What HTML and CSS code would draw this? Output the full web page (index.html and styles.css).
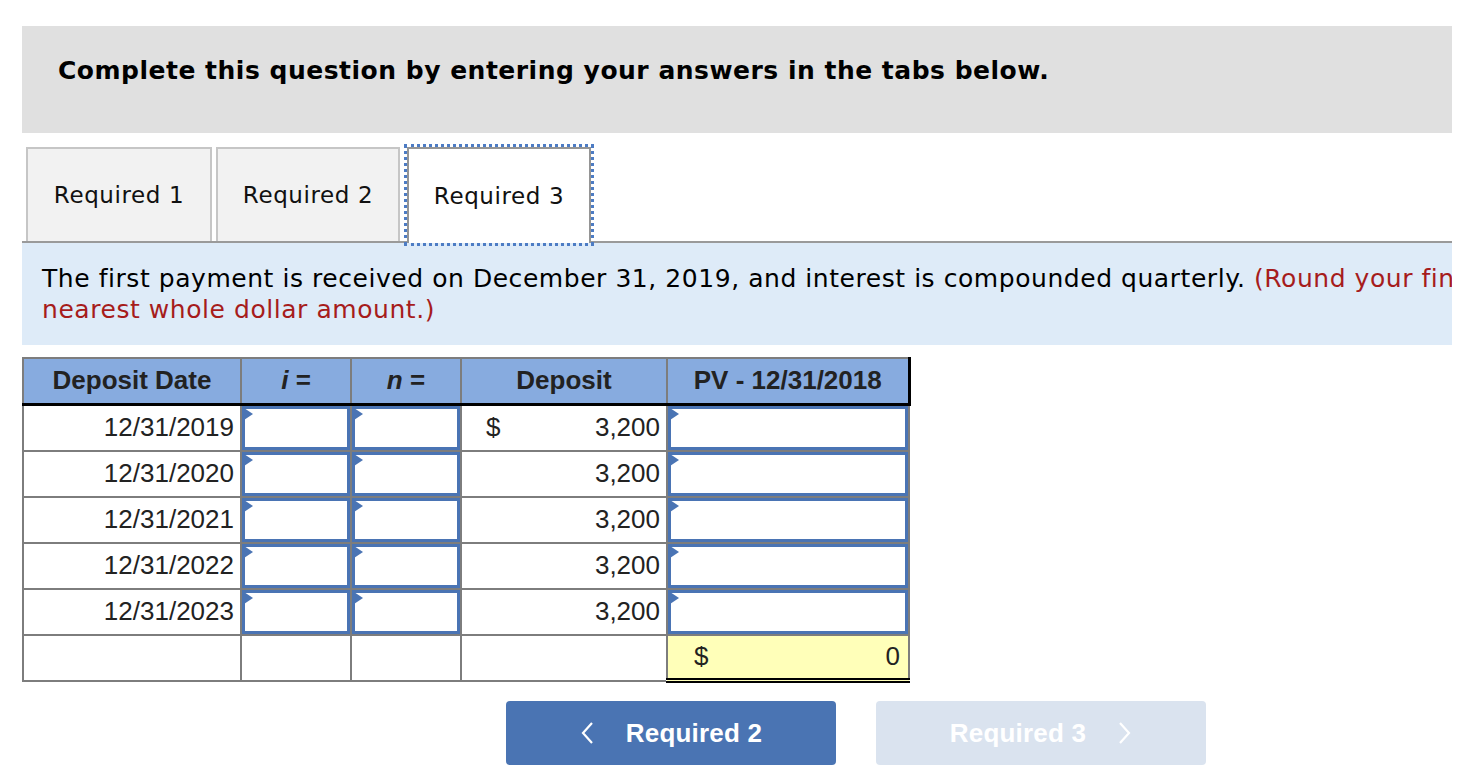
FILE: index.html
```html
<!DOCTYPE html>
<html>
<head>
<meta charset="utf-8">
<link rel="stylesheet" href="styles.css">
</head>
<body>
<div class="page">
  <div class="banner">Complete this question by entering your answers in the tabs below.</div>
  <div class="tabs">
    <div class="tab">Required 1</div>
    <div class="tab">Required 2</div>
    <div class="tab active">Required 3</div>
  </div>
  <div class="panel">
    <p class="instr">The first payment is received on December 31, 2019, and interest is compounded quarterly. <span class="red">(Round your final answers to the<br>nearest whole dollar amount.)</span></p>
  </div>
  <table class="grid">
    <colgroup>
      <col class="c1"><col class="c2"><col class="c3"><col class="c4"><col class="c5">
    </colgroup>
    <thead>
      <tr>
        <th>Deposit Date</th>
        <th><i>i</i> =</th>
        <th><i>n</i> =</th>
        <th>Deposit</th>
        <th class="last">PV - 12/31/2018</th>
      </tr>
    </thead>
    <tbody>
      <tr>
        <td class="date">12/31/2019</td>
        <td class="in"><div class="box"></div></td>
        <td class="in"><div class="box"></div></td>
        <td class="amt"><span class="cur">$</span><span>3,200</span></td>
        <td class="in"><div class="box"></div></td>
      </tr>
      <tr>
        <td class="date">12/31/2020</td>
        <td class="in"><div class="box"></div></td>
        <td class="in"><div class="box"></div></td>
        <td class="amt"><span class="cur"></span><span>3,200</span></td>
        <td class="in"><div class="box"></div></td>
      </tr>
      <tr>
        <td class="date">12/31/2021</td>
        <td class="in"><div class="box"></div></td>
        <td class="in"><div class="box"></div></td>
        <td class="amt"><span class="cur"></span><span>3,200</span></td>
        <td class="in"><div class="box"></div></td>
      </tr>
      <tr>
        <td class="date">12/31/2022</td>
        <td class="in"><div class="box"></div></td>
        <td class="in"><div class="box"></div></td>
        <td class="amt"><span class="cur"></span><span>3,200</span></td>
        <td class="in"><div class="box"></div></td>
      </tr>
      <tr>
        <td class="date">12/31/2023</td>
        <td class="in"><div class="box"></div></td>
        <td class="in"><div class="box"></div></td>
        <td class="amt"><span class="cur"></span><span>3,200</span></td>
        <td class="in"><div class="box"></div></td>
      </tr>
      <tr class="total">
        <td></td>
        <td></td>
        <td></td>
        <td></td>
        <td class="sum"><span class="cur">$</span><span>0</span></td>
      </tr>
    </tbody>
  </table>
  <div class="nav">
    <button class="btn prev">
      <svg width="14" height="24" viewBox="0 0 14 24"><path d="M12 2 L3 12 L12 22" fill="none" stroke="#ffffff" stroke-width="2.2"/></svg>
      <span>Required 2</span>
    </button>
    <button class="btn next">
      <span>Required 3</span>
      <svg width="14" height="24" viewBox="0 0 14 24"><path d="M2 2 L11 12 L2 22" fill="none" stroke="#ffffff" stroke-width="2.2"/></svg>
    </button>
  </div>
</div>
</body>
</html>
```

FILE: styles.css
```css
* { box-sizing: border-box; }
html, body { margin: 0; padding: 0; background: #ffffff; }
.page {
  width: 1466px;
  height: 784px;
  overflow: hidden;
  padding: 26px 14px 0 22px;
  font-family: "DejaVu Sans", Verdana, sans-serif;
  color: #000;
}
.banner {
  background: #e0e0e0;
  height: 107px;
  padding: 30px 0 0 36px;
  font-weight: bold;
  font-size: 25px;
  letter-spacing: 0.5px;
  line-height: 30px;
  color: #000;
}
.tabs {
  display: flex;
  margin-top: 14px;
  height: 96px;
  border-bottom: 2px solid #9a9a9a;
  padding-left: 4px;
  gap: 4px;
}
.tab {
  height: 94px;
  width: 186px;
  background: #f2f2f2;
  border: 2px solid #c6c6c6;
  border-bottom: none;
  display: flex;
  align-items: center;
  justify-content: center;
  font-size: 23px;
  letter-spacing: 0.6px;
  color: #111;
}
.tab + .tab { width: 184px; }
.tab.active {
  width: 184px;
  margin-left: 3px;
  background: #ffffff;
  border: 2px solid #959595;
  border-bottom: none;
  height: 96px;
  outline: 3px dotted #4d7cc4;
  outline-offset: 0px;
  position: relative;
}
.panel {
  background: #deebf8;
  height: 102px;
  padding: 20px 0 0 20px;
  overflow: hidden;
}
.instr {
  margin: 0;
  font-size: 25px;
  letter-spacing: 0.55px;
  line-height: 31px;
  color: #000;
  white-space: nowrap;
}
.red { color: #a61c1c; }
.grid {
  margin-top: 12px;
  border-collapse: collapse;
  table-layout: fixed;
  width: 886px;
  font-family: "Liberation Sans", Arial, sans-serif;
  font-size: 26px;
  color: #222;
}
.c1 { width: 218px; }
.c2 { width: 110px; }
.c3 { width: 110px; }
.c4 { width: 206px; }
.c5 { width: 242px; }
.grid th {
  background: #87abdf;
  height: 46px;
  border: 2px solid #7d7d7d;
  border-bottom: 3px solid #000;
  font-weight: bold;
  text-align: center;
  padding: 0;
}
.grid th.last { border-right: 3px solid #000; }
.grid td {
  height: 46px;
  border: 2px solid #7d7d7d;
  padding: 0;
  vertical-align: middle;
}
.grid td.date { text-align: right; padding-right: 6px; }
.grid td.in { padding: 0; position: relative; }
.box {
  height: 44px;
  border: 3px solid #4a74b4;
  position: relative;
  background: #fff;
}
.box::before {
  content: "";
  position: absolute;
  left: -1px;
  top: -1px;
  border-left: 9px solid #4a74b4;
  border-top: 6px solid transparent;
  border-bottom: 6px solid transparent;
}
.grid td.amt {
  padding: 0 6px 0 24px;
}
.amt, .sum { white-space: nowrap; }
.amt .cur, .sum .cur { float: left; }
.amt span:last-child, .sum span:last-child { float: right; }
.grid td.sum {
  background: #ffffb9;
  padding: 0 8px 0 26px;
  border-bottom: 5px double #000;
}
.nav {
  display: flex;
  gap: 40px;
  padding-left: 484px;
  margin-top: 18px;
}
.btn {
  width: 330px;
  height: 64px;
  border: none;
  border-radius: 4px;
  display: flex;
  align-items: center;
  justify-content: center;
  gap: 32px;
  font-family: "Liberation Sans", Arial, sans-serif;
  font-weight: bold;
  font-size: 26px;
  color: #ffffff;
  letter-spacing: 0.2px;
  padding: 0;
}
.btn.prev { background: #4a74b3; }
.btn.next { background: #dae3ef; }
```
